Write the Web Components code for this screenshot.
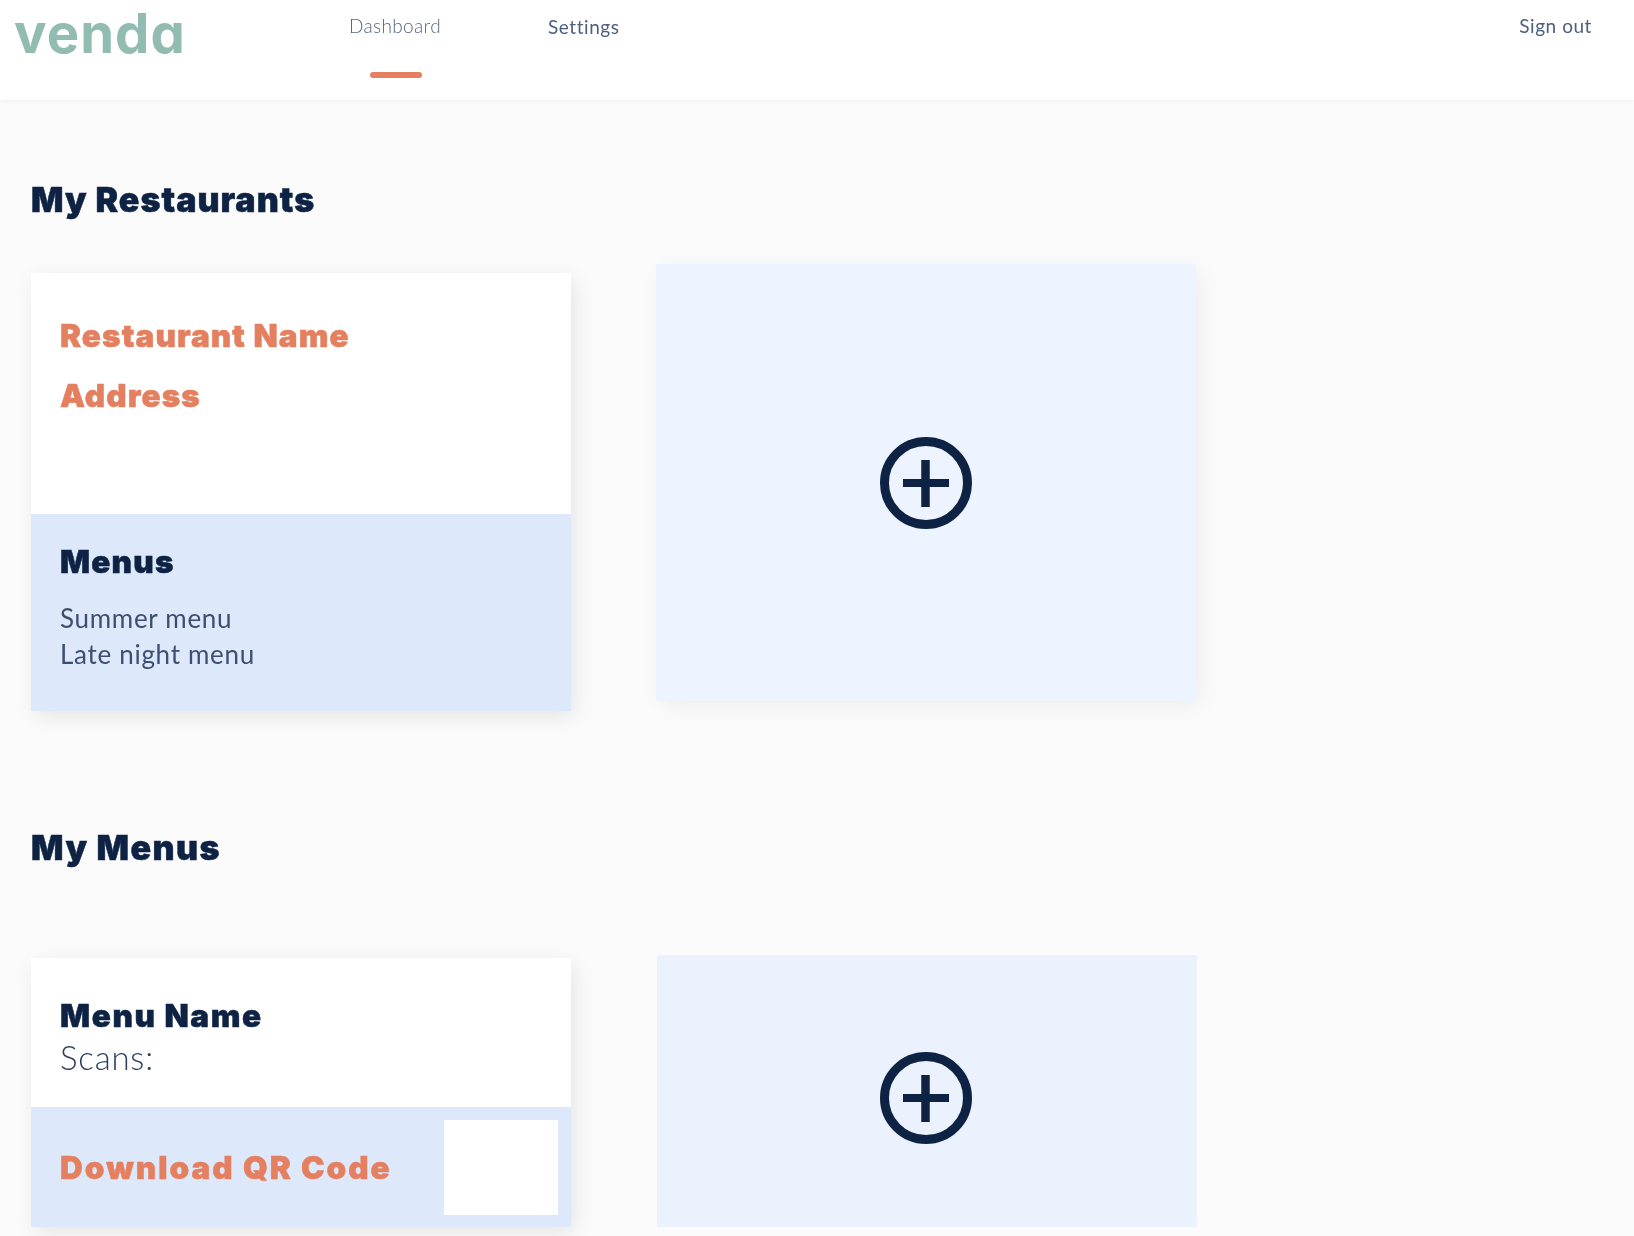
<!DOCTYPE html>
<html lang="en">
<head>
<meta charset="utf-8">
<title>Venda dashboard</title>
<style>
  html, body { margin: 0; height: 1236px; overflow: hidden; background: #fbfbfc; }
  body { font-family: Lato, "Liberation Sans", sans-serif; color: #0e2344; }
</style>
</head>
<body>
  <venda-header>
    <nav-link active>Dashboard</nav-link>
    <nav-link nudge>Settings</nav-link>
  </venda-header>
  <dash-section heading="My Restaurants" style="--top:80px;--row-top:44px">
    <restaurant-card style="margin-top:9px" name="Restaurant Name" address="Address">
      <div>Summer menu</div>
      <div>Late night menu</div>
    </restaurant-card>
    <add-tile style="height:437px;background:#edf4ff;box-shadow:5px 5px 20px rgba(0,0,0,.06)"></add-tile>
  </dash-section>
  <dash-section heading="My Menus" style="--top:117px;--row-top:87px;--track:1.4px">
    <menu-card style="margin-top:3px" name="Menu Name"></menu-card>
    <add-tile style="height:272px;padding:14px 2px 0 0;margin-left:1px;background:#ebf2fd"></add-tile>
  </dash-section>

<script>
const headerTemplate = document.createElement("template");
headerTemplate.innerHTML = `
  <style>
    :host { display: flex; align-items: flex-start; height: 100px; box-sizing: border-box; padding: 14px 42px 0 14px; background: #fff; box-shadow: 0 1px 7px rgba(0,0,0,.05); position: relative; }
    .logo { width: 335px; margin-top: -14px; font: 700 54.5px/66px Inter, sans-serif; font-feature-settings: "cv11" 1; letter-spacing: 1px; color: #92bcb2; filter: blur(.4px); }
    nav { display: flex; gap: 107px; }
    .out { margin-left: auto; font: 400 19px/24px Lato, sans-serif; letter-spacing: .55px; color: #4c5f7e; filter: blur(.4px); }
  </style>
  <div class="logo">venda</div>
  <nav><slot></slot></nav>
  <div class="out">Sign out</div>
`;
class VendaHeader extends HTMLElement {
  connectedCallback() {
    if (!this.shadowRoot) {
      this.attachShadow({ mode: "open" }).appendChild(headerTemplate.content.cloneNode(true));
    }
  }
}
customElements.define("venda-header", VendaHeader);

const linkTemplate = document.createElement("template");
linkTemplate.innerHTML = `
  <style>
    :host { display: flex; flex-direction: column; align-items: center; font: 300 19px/24px Lato, sans-serif; letter-spacing: .35px; color: #55657f; }
    :host([nudge]) { margin-top: 1px; font-weight: 400; letter-spacing: .55px; color: #4c5f7e; }
    span { filter: blur(.4px); }
    i { display: none; width: 52px; height: 6px; margin: 34px 0 0 2px; border-radius: 3px; background: #e47f60; }
    :host([active]) i { display: block; }
  </style>
  <span><slot></slot></span>
  <i></i>
`;
class NavLink extends HTMLElement {
  connectedCallback() {
    if (!this.shadowRoot) {
      this.attachShadow({ mode: "open" }).appendChild(linkTemplate.content.cloneNode(true));
    }
  }
}
customElements.define("nav-link", NavLink);

const sectionTemplate = document.createElement("template");
sectionTemplate.innerHTML = `
  <style>
    :host { display: block; padding: var(--top) 0 0 31px; }
    h2 { margin: 0; font: 900 34px/40px Inter, sans-serif; letter-spacing: var(--track, 1px); -webkit-text-stroke: .5px #0e2344; color: #0e2344; filter: blur(.4px); }
    .row { display: flex; align-items: flex-start; gap: 85px; margin-top: var(--row-top); }
  </style>
  <h2></h2>
  <div class="row"><slot></slot></div>
`;
class DashSection extends HTMLElement {
  connectedCallback() {
    if (!this.shadowRoot) {
      this.attachShadow({ mode: "open" }).appendChild(sectionTemplate.content.cloneNode(true));
    }
    this.shadowRoot.querySelector("h2").textContent = this.getAttribute("heading");
  }
}
customElements.define("dash-section", DashSection);

const restaurantTemplate = document.createElement("template");
restaurantTemplate.innerHTML = `
  <style>
    :host { display: block; width: 540px; flex: none; box-shadow: 4px 6px 20px rgba(0,0,0,.09); }
    .top { height: 241px; box-sizing: border-box; padding: 33px 29px 0; background: #fff; font: 900 31.5px/60px Inter, sans-serif; letter-spacing: 1.1px; -webkit-text-stroke: .5px #e47f60; color: #e47f60; }
    .bottom { height: 197px; box-sizing: border-box; padding: 28px 29px 0; background: #dde8fb; }
    h3 { margin: 0; font: 900 31.5px/40px Inter, sans-serif; letter-spacing: 1.2px; -webkit-text-stroke: .5px #0e2344; color: #0e2344; }
    .list { margin-top: 18px; font: 400 26px/36px Lato, sans-serif; letter-spacing: .7px; color: #3d4f70; }
    .top div, h3, .list { filter: blur(.4px); }
  </style>
  <div class="top"><div class="name"></div><div class="address"></div></div>
  <div class="bottom">
    <h3>Menus</h3>
    <div class="list"><slot></slot></div>
  </div>
`;
class RestaurantCard extends HTMLElement {
  connectedCallback() {
    if (!this.shadowRoot) {
      this.attachShadow({ mode: "open" }).appendChild(restaurantTemplate.content.cloneNode(true));
    }
    this.shadowRoot.querySelector(".name").textContent = this.getAttribute("name");
    this.shadowRoot.querySelector(".address").textContent = this.getAttribute("address");
  }
}
customElements.define("restaurant-card", RestaurantCard);

const menuTemplate = document.createElement("template");
menuTemplate.innerHTML = `
  <style>
    :host { display: block; width: 540px; flex: none; box-shadow: 4px 6px 20px rgba(0,0,0,.09); }
    .top { height: 149px; box-sizing: border-box; padding: 40px 29px 0; background: #fff; }
    h3 { margin: 0; font: 900 31.5px/36px Inter, sans-serif; letter-spacing: 1.6px; -webkit-text-stroke: .5px #0e2344; color: #0e2344; }
    .scans { margin-top: 1px; font: 300 33px/44px Lato, sans-serif; letter-spacing: .8px; color: #2e4060; }
    .bottom { display: flex; align-items: center; justify-content: space-between; height: 120px; box-sizing: border-box; padding: 0 13px 0 29px; background: #dde8fb; }
    .qr-link { padding-top: 2px; font: 900 31.5px/40px Inter, sans-serif; letter-spacing: 2px; -webkit-text-stroke: .5px #e47f60; color: #e47f60; }
    .qr { width: 114px; height: 95px; background: #fff; }
    h3, .scans, .qr-link { filter: blur(.4px); }
  </style>
  <div class="top">
    <h3></h3>
    <div class="scans">Scans:</div>
  </div>
  <div class="bottom">
    <div class="qr-link">Download QR Code</div>
    <div class="qr"></div>
  </div>
`;
class MenuCard extends HTMLElement {
  connectedCallback() {
    if (!this.shadowRoot) {
      this.attachShadow({ mode: "open" }).appendChild(menuTemplate.content.cloneNode(true));
    }
    this.shadowRoot.querySelector("h3").textContent = this.getAttribute("name");
  }
}
customElements.define("menu-card", MenuCard);

const tileTemplate = document.createElement("template");
tileTemplate.innerHTML = `
  <style>
    :host { display: flex; align-items: center; justify-content: center; width: 540px; box-sizing: border-box; flex: none; }
    svg { display: block; filter: blur(.4px); }
  </style>
  <svg width="92" height="92" viewBox="0 0 92 92" fill="none" stroke="#0e2344">
    <circle cx="46" cy="46" r="41.5" stroke-width="9"/>
    <path d="M23 46H69" stroke-width="8"/>
    <path d="M45.5 23V70" stroke-width="8.5"/>
  </svg>
`;
class AddTile extends HTMLElement {
  connectedCallback() {
    if (!this.shadowRoot) {
      this.attachShadow({ mode: "open" }).appendChild(tileTemplate.content.cloneNode(true));
    }
  }
}
customElements.define("add-tile", AddTile);
</script>
</body>
</html>
